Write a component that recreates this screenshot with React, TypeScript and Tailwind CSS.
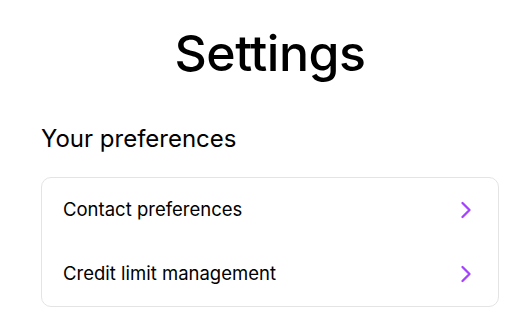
import { ChevronRight } from "lucide-react";

const ITEMS = ["Contact preferences", "Credit limit management"];

export default function App() {
  return (
    <div className="min-h-[330px] w-[526px] bg-white pl-[41px] pr-[27px] font-['Inter',sans-serif] text-black">
      <h1 className="pt-[22px] text-center text-[50px] font-medium leading-[62px] tracking-[-0.5px]">
        Settings
      </h1>

      <section className="pt-[40px]">
        <h2 className="text-[24px] leading-[30px] font-normal">Your preferences</h2>

        <div className="mt-[23px] rounded-[10px] border border-[#e4e4e4] pl-[21px] pr-[18px]">
          {ITEMS.map((label) => (
            <div key={label} className="flex h-[64px] items-center justify-between">
              <span className="text-[18.5px]">{label}</span>
              <ChevronRight size={28} strokeWidth={2} className="text-[#a342ff]" />
            </div>
          ))}
        </div>
      </section>
    </div>
  );
}
